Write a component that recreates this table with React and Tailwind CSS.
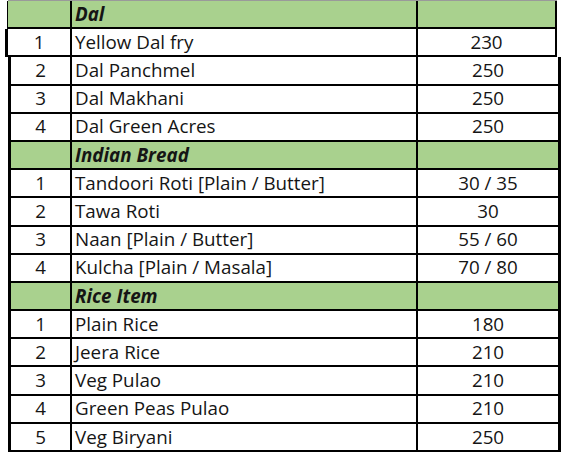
import React from "react";

const sections = [
  {
    title: "Dal",
    items: [
      ["1", "Yellow Dal fry", "230"],
      ["2", "Dal Panchmel", "250"],
      ["3", "Dal Makhani", "250"],
      ["4", "Dal Green Acres", "250"],
    ],
  },
  {
    title: "Indian Bread",
    items: [
      ["1", "Tandoori Roti [Plain / Butter]", "30 / 35"],
      ["2", "Tawa Roti", "30"],
      ["3", "Naan [Plain / Butter]", "55 / 60"],
      ["4", "Kulcha [Plain / Masala]", "70 / 80"],
    ],
  },
  {
    title: "Rice Item",
    items: [
      ["1", "Plain Rice", "180"],
      ["2", "Jeera Rice", "210"],
      ["3", "Veg Pulao", "210"],
      ["4", "Green Peas Pulao", "210"],
      ["5", "Veg Biryani", "250"],
    ],
  },
];

const Row = ({ num, name, price, head, shift, first }) => {
  // first block of the sheet sits a few px left of the rest
  let edge = "ml-[8px] mr-[4px] border-l-[3px] border-r-[3px]";
  let numW = "w-[61px]";
  if (shift) {
    edge = "ml-[5px] mr-[8px] border-l-[3px] border-r-2";
    numW = "w-[64px]";
  }
  if (first) {
    edge = "ml-[7px] mr-[8px] border-l border-r-2";
    numW = "w-[64px]";
  }
  return (
    <div
      className={`flex h-[28.2px] border-b-2 border-black ${edge} ${
        head ? "bg-[#a9d18e]" : "bg-white"
      }`}
    >
      <div
        className={`${numW} shrink-0 flex items-center justify-center border-r-2 border-black`}
      >
        {num}
      </div>
      <div
        className={`w-[346px] shrink-0 flex items-center pl-[3px] border-r-2 border-black ${
          head ? "font-bold italic" : ""
        }`}
      >
        {name}
      </div>
      <div className="flex-1 flex items-center justify-center">{price}</div>
    </div>
  );
};

export default function App() {
  return (
    <div
      className="w-[565px] h-[457px] bg-white text-[#151515] text-[18.8px] leading-none overflow-hidden"
      style={{ fontFamily: "'Open Sans', Lato, sans-serif" }}
    >
      <div className="h-px bg-[#9a9a9a] ml-[8px] mr-[8px]" />
      {sections.map((s, si) => [
        <Row key={s.title} head name={s.title} first={si === 0} />,
        ...s.items.map((it, i) => (
          <Row
            key={s.title + i}
            num={it[0]}
            name={it[1]}
            price={it[2]}
            shift={si === 0 && i === 0}
          />
        )),
      ])}
    </div>
  );
}
